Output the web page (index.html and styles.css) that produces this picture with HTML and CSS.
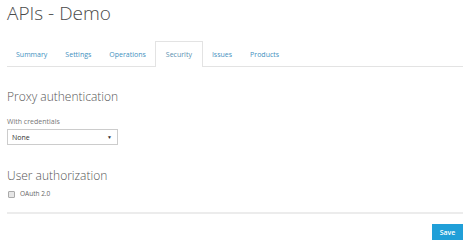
FILE: index.html
```html
<!DOCTYPE html>
<html lang="en">
<head>
    <meta charset="UTF-8">
    <title>APIs - Demo</title>
    <link rel="stylesheet" href="styles.css">
</head>
<body>
    <div class="page">
        <h1>APIs - Demo</h1>
        <ul class="tabs">
            <li><a href="#">Summary</a></li>
            <li><a href="#">Settings</a></li>
            <li><a href="#">Operations</a></li>
            <li class="active"><a href="#">Security</a></li>
            <li><a href="#">Issues</a></li>
            <li><a href="#">Products</a></li>
        </ul>

        <h2 class="section-title first">Proxy authentication</h2>
        <label class="field-label" for="credentials">With credentials</label>
        <div class="select-box">
            <span>None</span>
            <span class="arrow">&#9660;</span>
        </div>

        <h2 class="section-title">User authorization</h2>
        <label class="check">
            <span class="box"></span>
            OAuth 2.0
        </label>

        <div class="footer">
            <button type="button">Save</button>
        </div>
    </div>
</body>
</html>
```

FILE: styles.css
```css
body {
    margin: 0;
    font-family: "Open Sans", sans-serif;
    background-color: #fff;
    color: #444;
}
.page {
    padding: 0 11px 0 7px;
}
h1 {
    margin: 0;
    font-size: 19px;
    font-weight: 300;
    line-height: 26px;
    color: #4a4a4a;
}
.tabs {
    list-style: none;
    margin: 15px 0 0;
    padding: 0;
    display: flex;
    border-bottom: 1px solid #e3e3e3;
    height: 25px;
}
.tabs li {
    padding: 0 8px;
    border: 1px solid transparent;
    border-bottom: none;
    margin-bottom: -1px;
}
.tabs li a {
    display: block;
    font-size: 7px;
    line-height: 25px;
    color: #3f90c0;
    text-decoration: none;
}
.tabs li.active {
    border-color: #e3e3e3;
    background-color: #fff;
    height: 25px;
    padding: 0 10px;
}
.tabs li.active a {
    color: #5a8fb0;
}
.section-title {
    margin: 0;
    font-size: 12px;
    font-weight: 300;
    line-height: 20px;
    color: #555;
    margin-top: 21px;
}
.section-title.first {
    margin-top: 20px;
}
.field-label {
    display: block;
    margin-top: 10px;
    font-size: 7px;
    line-height: 10px;
    color: #777;
}
.select-box {
    display: flex;
    justify-content: space-between;
    align-items: center;
    width: 100px;
    height: 14px;
    margin-top: 2px;
    padding: 0 5px 0 4px;
    border: 1px solid #ccc;
    font-size: 7px;
    color: #333;
}
.select-box .arrow {
    font-size: 5px;
}
.check {
    display: flex;
    align-items: center;
    gap: 5px;
    margin-top: 3px;
    font-size: 6.5px;
    line-height: 10px;
    color: #666;
}
.check .box {
    width: 5px;
    height: 5px;
    border: 1px solid #aaa;
    background-color: #e6e6e6;
    border-radius: 1px;
    margin-left: 1px;
}
.footer {
    margin-top: 13px;
    border-top: 2px solid #ececec;
    display: flex;
    justify-content: flex-end;
    padding-top: 10px;
}
.footer button {
    background-color: #209fd8;
    color: #fff;
    border: none;
    font-family: "Open Sans", sans-serif;
    font-size: 7px;
    font-weight: 600;
    width: 31px;
    height: 16px;
    padding: 0;
}
```
